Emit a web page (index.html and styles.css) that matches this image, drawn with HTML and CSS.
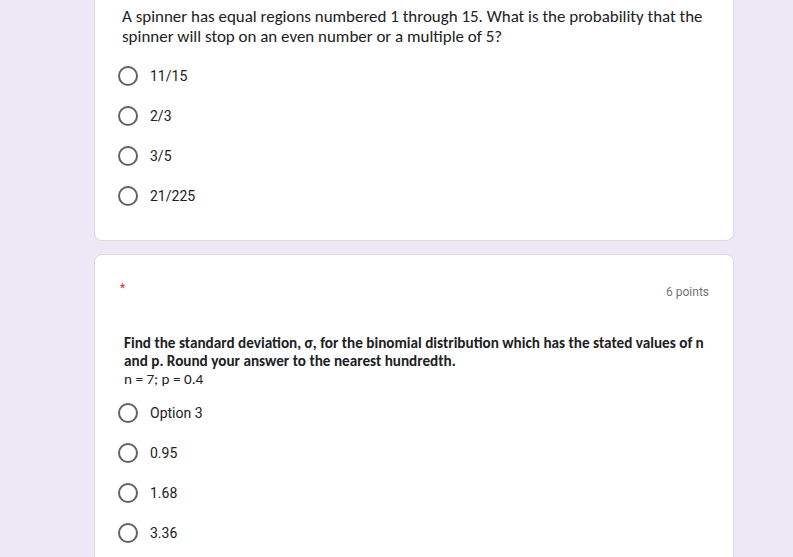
FILE: index.html
```html
<!DOCTYPE html>
<html>
<head>
<meta charset="utf-8">
<link rel="stylesheet" href="styles.css">
</head>
<body>
<div class="page">
  <div class="card card-first">
    <div class="q-title">A spinner has equal regions numbered 1 through 15. What is the probability that the<br>spinner will stop on an even number or a multiple of 5?</div>
    <div class="options">
      <div class="opt"><span class="radio"></span><span class="label">11/15</span></div>
      <div class="opt"><span class="radio"></span><span class="label">2/3</span></div>
      <div class="opt"><span class="radio"></span><span class="label">3/5</span></div>
      <div class="opt"><span class="radio"></span><span class="label">21/225</span></div>
    </div>
  </div>
  <div class="card card-second">
    <div class="q-head">
      <span class="req">*</span>
      <span class="points">6 points</span>
    </div>
    <div class="q-bold">
      <div class="b">Find the standard deviation, σ, for the binomial distribution which has the stated values of n<br>and p. Round your answer to the nearest hundredth.</div>
      <div class="plain">n = 7; p = 0.4</div>
    </div>
    <div class="options options-2">
      <div class="opt"><span class="radio"></span><span class="label">Option 3</span></div>
      <div class="opt"><span class="radio"></span><span class="label">0.95</span></div>
      <div class="opt"><span class="radio"></span><span class="label">1.68</span></div>
      <div class="opt"><span class="radio"></span><span class="label">3.36</span></div>
    </div>
  </div>
</div>
</body>
</html>
```

FILE: styles.css
```css
html, body {
  margin: 0;
  padding: 0;
  background: #ede7f6;
  height: 100%;
  overflow: hidden;
}
.page {
  width: 640px;
  margin-left: 94px;
  margin-top: -20px;
  display: flex;
  flex-direction: column;
  gap: 13px;
}
.card {
  background: #fff;
  border: 1px solid #dadce0;
  border-radius: 8px;
  padding: 0 24px 24px 24px;
}
.card-first {
  padding-top: 26px;
}
.card-second {
  padding-top: 24px;
  height: 400px;
}
.q-title {
  font-family: "Carlito", "Lato", sans-serif;
  font-size: 16.95px;
  line-height: 20px;
  color: #202124;
  padding-left: 3px;
  white-space: nowrap;
}
.options {
  margin-top: 9px;
  display: flex;
  flex-direction: column;
}
.opt {
  height: 40px;
  display: flex;
  align-items: center;
}
.radio {
  width: 16px;
  height: 16px;
  border: 2px solid #5f6368;
  border-radius: 50%;
  margin-left: -1px;
  flex: none;
}
.label {
  font-family: Roboto, "Liberation Sans", sans-serif;
  font-size: 14px;
  color: #202124;
  margin-left: 12px;
}
.q-head {
  height: 24px;
  display: flex;
  justify-content: space-between;
  align-items: flex-start;
}
.req {
  color: #d93025;
  font-family: Roboto, sans-serif;
  font-size: 12px;
  line-height: 14px;
  margin-left: 1px;
  margin-top: 2px;
}
.points {
  font-family: Roboto, "Liberation Sans", sans-serif;
  font-size: 12px;
  line-height: 26px;
  color: #70757a;
}
.q-bold {
  margin-top: 31px;
  padding-left: 5px;
  font-family: "Carlito", "Lato", sans-serif;
  font-size: 15.2px;
  line-height: 18px;
  color: #202124;
  white-space: nowrap;
}
.q-bold .b {
  font-weight: bold;
}
.q-bold .plain {
  line-height: 19px;
}
.options-2 {
  margin-top: 4px;
}
```
